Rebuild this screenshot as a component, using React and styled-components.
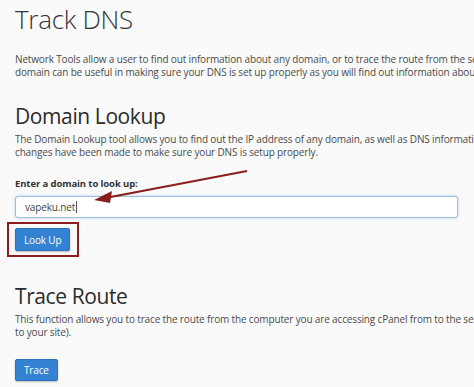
import React from 'react';
import styled, { createGlobalStyle } from 'styled-components';

const Global = createGlobalStyle`
  html, body {
    margin: 0;
    padding: 0;
    background: #fafafa;
    overflow: hidden;
  }
  body {
    font-family: "Open Sans", "Noto Sans", sans-serif;
    color: #333;
  }
`;

const Page = styled.div`
  position: relative;
  width: 474px;
  height: 387px;
  overflow: hidden;
  padding: 0 15px;
  box-sizing: border-box;
`;

const Title = styled.h1`
  margin: 0;
  padding-top: 1px;
  font-size: 26px;
  font-weight: 300;
  letter-spacing: -0.3px;
  line-height: 36px;
  color: #333;
`;

const Heading = styled.h2`
  margin: ${p => p.top || 0}px 0 0;
  font-size: 21px;
  font-weight: 400;
  letter-spacing: -0.4px;
  line-height: 26px;
  color: #2b2b2b;
`;

const Text = styled.p`
  margin: ${p => p.top || 0}px 0 0;
  font-size: 10px;
  letter-spacing: -0.15px;
  line-height: 13px;
  color: #4a4a4a;
  width: 900px;
  span {
    display: block;
    white-space: nowrap;
  }
`;

const Label = styled.label`
  display: block;
  margin-top: 18px;
  font-size: 9.5px;
  font-weight: 700;
  letter-spacing: -0.1px;
  line-height: 14px;
  color: #333;
`;

const Input = styled.div`
  margin-top: 5px;
  width: 443px;
  height: 22px;
  box-sizing: border-box;
  border: 1px solid #9fbedc;
  border-radius: 3px;
  background: #fff;
  box-shadow: 0 0 3px rgba(102, 160, 220, 0.5);
  display: flex;
  align-items: center;
  padding-left: 9px;
  font-size: 10px;
  letter-spacing: -0.15px;
  color: #444;
`;

const Caret = styled.span`
  display: inline-block;
  width: 1px;
  height: 12px;
  background: #555;
  margin-left: 1px;
`;

const Highlight = styled.div`
  display: flex;
  width: fit-content;
  margin: 4px 0 0 -8px;
  padding: 4px 7px 4px 6px;
  border: 2px solid #8b1d1d;
`;

const Button = styled.button`
  display: block;
  height: ${p => p.h || 23}px;
  padding: 0 ${p => p.px || 8}px;
  border: 1px solid #2a74bf;
  border-radius: 2px;
  background: #3483d2;
  color: #fff;
  font-family: "Open Sans", "Noto Sans", sans-serif;
  font-size: 10px;
  letter-spacing: -0.15px;
  box-shadow: 0 1px 2px rgba(0, 0, 0, 0.25);
  margin-top: ${p => p.top || 0}px;
`;

const Arrow = styled.svg`
  position: absolute;
  left: 0;
  top: 0;
  pointer-events: none;
`;

export default function App() {
  return (
    <Page>
      <Global />
      <Title>Track DNS</Title>
      <Text top={16}>
        <span>Network Tools allow a user to find out information about any domain, or to trace the route from the server your site is on to the computer you are accessing cPanel from.</span>
        <span>domain can be useful in making sure your DNS is set up properly as you will find out information about your IP address as well as your DNS.</span>
      </Text>
      <Heading top={24}>Domain Lookup</Heading>
      <Text top={4}>
        <span>The Domain Lookup tool allows you to find out the IP address of any domain, as well as DNS information about that domain. This can be a very useful tool right after your site is set up or after DNS</span>
        <span>changes have been made to make sure your DNS is setup properly.</span>
      </Text>
      <Label>Enter a domain to look up:</Label>
      <Input>vapeku.net<Caret /></Input>
      <Highlight>
        <Button h={23} px={8}>Look Up</Button>
      </Highlight>
      <Heading top={26}>Trace Route</Heading>
      <Text top={4}>
        <span>This function allows you to trace the route from the computer you are accessing cPanel from to the server (the route data travels to get from your computer</span>
        <span>to your site).</span>
      </Text>
      <Button h={22} px={8} top={20}>Trace</Button>
      <Arrow width="474" height="387" viewBox="0 0 474 387">
        <line x1="247" y1="171" x2="108" y2="197.5" stroke="#8b1d1d" strokeWidth="2.2" />
        <polygon points="94,200 112,191 110,203" fill="#8b1d1d" />
      </Arrow>
    </Page>
  );
}
